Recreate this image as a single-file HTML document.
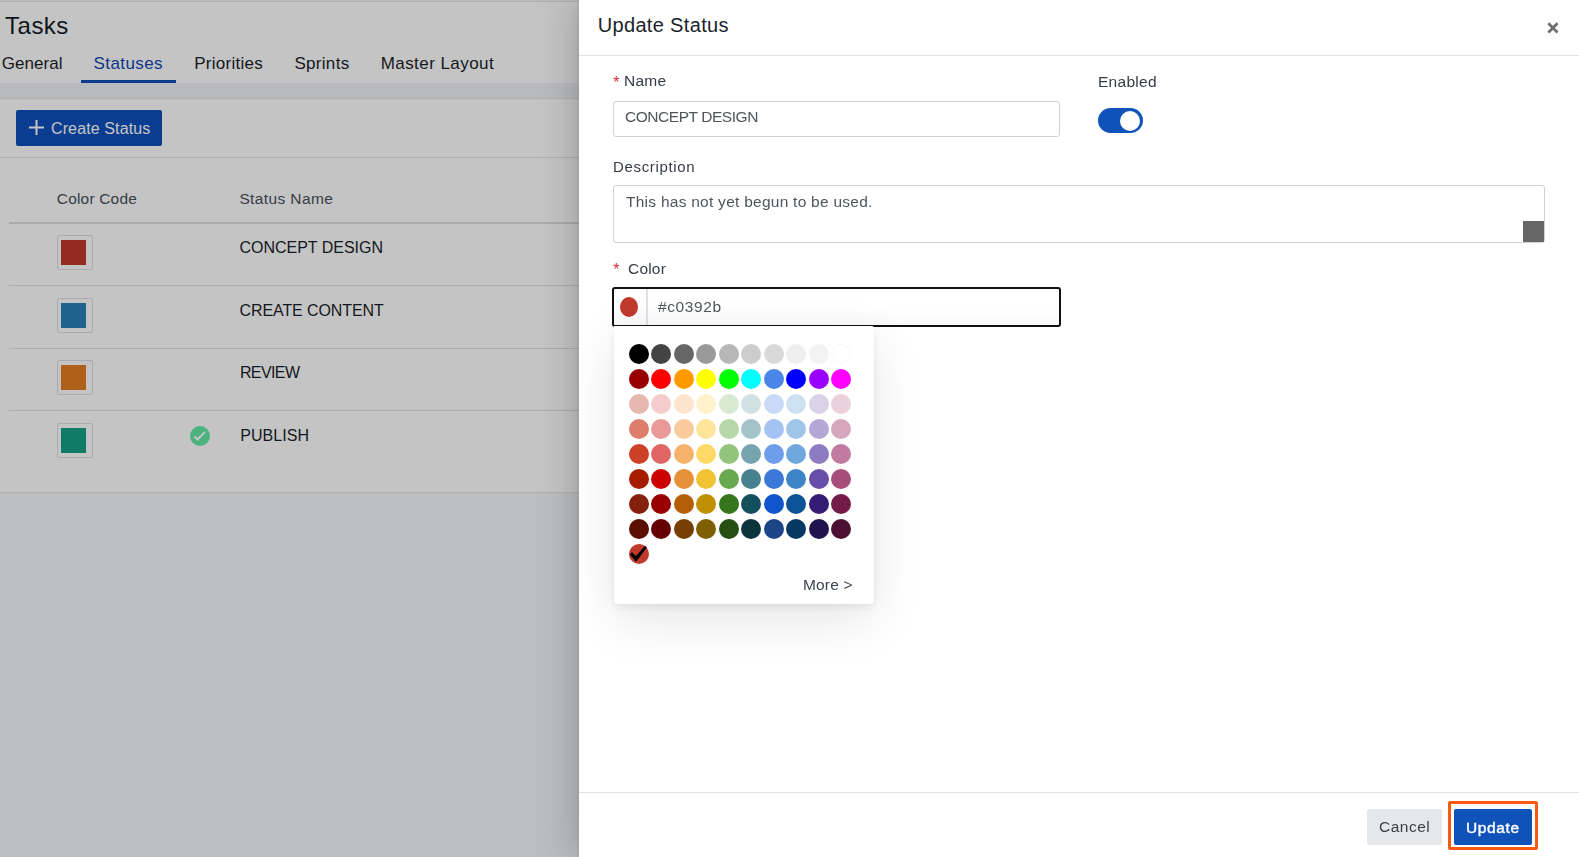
<!DOCTYPE html>
<html><head><meta charset="utf-8">
<style>
*{box-sizing:border-box;margin:0;padding:0}
html,body{width:1579px;height:857px;overflow:hidden;background:#fff;font-family:"Liberation Sans",sans-serif;position:relative}
.a{position:absolute;white-space:nowrap;line-height:1}
.g{will-change:transform}
.b{position:absolute}
#mask{position:absolute;left:0;top:0;width:1579px;height:857px;background:rgba(0,0,0,0.23)}
#drawer{position:absolute;left:579px;top:0;width:1000px;height:857px;background:#fff;box-shadow:-8px 0 32px rgba(0,0,0,0.17),-1px 0 4px rgba(0,0,0,0.08)}
.sw{position:absolute;left:57px;width:36px;height:35px;border:1px solid #dcdfe4;border-radius:2px;background:#fff}
.sw i{position:absolute;left:3px;top:4px;width:25px;height:25px}
.pal{position:absolute;width:20px;height:20px;border-radius:50%}
</style></head><body>
<div class="b" style="left:0;top:0;width:579px;height:1px;background:#f3f3f3"></div><div class="b" style="left:0;top:1px;width:579px;height:1px;background:#e0e3e9"></div>
<div class="a" style="left:5.1px;top:13.8px;font-size:24px;letter-spacing:0.47px;color:#161a26;">Tasks</div>
<div class="a" style="left:1.7px;top:55.0px;font-size:17px;letter-spacing:0.08px;color:#1b1f2a;">General</div>
<div class="a" style="left:93.5px;top:55.0px;font-size:17px;letter-spacing:0.41px;color:#1048b0;">Statuses</div>
<div class="a" style="left:194.2px;top:55.0px;font-size:17px;letter-spacing:0.26px;color:#1b1f2a;">Priorities</div>
<div class="a" style="left:294.4px;top:55.0px;font-size:17px;letter-spacing:0.31px;color:#1b1f2a;">Sprints</div>
<div class="a" style="left:380.7px;top:55.0px;font-size:17px;letter-spacing:0.44px;color:#1b1f2a;">Master Layout</div>
<div class="b" style="left:81px;top:80px;width:95px;height:3px;background:#0f4fb8"></div>
<div class="b" style="left:0;top:83px;width:579px;height:15px;background:#f1f3f7"></div>
<div class="b" style="left:0;top:98px;width:579px;height:1px;background:#e3e5ea"></div>
<div class="b" style="left:16px;top:110px;width:146px;height:36px;background:#0e50bd;border-radius:2px"></div>
<svg class="b" style="left:29px;top:120px" width="15" height="15"><path d="M7.5 0V15M0 7.5H15" stroke="#fff" stroke-width="2"/></svg>
<div class="a" style="left:51.0px;top:120.8px;font-size:16px;letter-spacing:0.12px;color:#fff;">Create Status</div>
<div class="b" style="left:0;top:157px;width:579px;height:1px;background:#e3e5ea"></div>
<div class="a" style="left:56.8px;top:191.4px;font-size:15.5px;letter-spacing:0.18px;color:#4a505c;">Color Code</div>
<div class="a" style="left:239.4px;top:190.6px;font-size:15.5px;letter-spacing:0.39px;color:#4a505c;">Status Name</div>
<div class="b" style="left:9px;top:222px;width:570px;height:2px;background:#dcdfe4"></div>
<div class="sw" style="top:235px"><i style="background:#c0392b"></i></div>
<div class="a" style="left:239.6px;top:240.1px;font-size:16px;letter-spacing:-0.03px;color:#1b1f2a;">CONCEPT DESIGN</div>
<div class="b" style="left:9px;top:285px;width:570px;height:1px;background:#dfe2e7"></div>
<div class="sw" style="top:298px"><i style="background:#2980b9"></i></div>
<div class="a" style="left:239.5px;top:303.0px;font-size:16px;letter-spacing:-0.09px;color:#1b1f2a;">CREATE CONTENT</div>
<div class="b" style="left:9px;top:348px;width:570px;height:1px;background:#dfe2e7"></div>
<div class="sw" style="top:360px"><i style="background:#e67e22"></i></div>
<div class="a" style="left:239.9px;top:365.1px;font-size:16px;letter-spacing:-0.6px;color:#1b1f2a;">REVIEW</div>
<div class="b" style="left:9px;top:410px;width:570px;height:1px;background:#dfe2e7"></div>
<div class="sw" style="top:423px"><i style="background:#16a085"></i></div>
<svg class="b" style="left:190px;top:426px" width="20" height="20"><circle cx="10" cy="10" r="10" fill="#63e9a5"/><path d="M4.5 10.5L7.5 13.5L15 6" stroke="#fff" stroke-width="2" fill="none"/></svg>
<div class="a" style="left:240.3px;top:428.0px;font-size:16px;letter-spacing:0.03px;color:#1b1f2a;">PUBLISH</div>
<div class="b" style="left:0;top:492px;width:579px;height:1px;background:#e6e6e6"></div>
<div class="b" style="left:0;top:493px;width:579px;height:364px;background:#f5f6fa"></div>
<div id="mask"></div>
<div id="drawer"></div>
<div class="a" style="left:597.7px;top:15.4px;font-size:20px;letter-spacing:0.34px;color:#1b1f2a;">Update Status</div>
<svg class="b" style="left:1547px;top:21.5px" width="12" height="12"><path d="M1.3 1.3L10.5 10.5M10.5 1.3L1.3 10.5" stroke="#6e6e6e" stroke-width="2.7"/></svg>
<div class="b" style="left:579px;top:55px;width:1000px;height:1px;background:#e1e4e9"></div>
<div class="a" style="left:613.2px;top:75px;font-size:16px;color:#e0303a">*</div>
<div class="a g" style="left:624.4px;top:73.4px;font-size:15.5px;letter-spacing:0.23px;color:#363b47;">Name</div>
<div class="a g" style="left:1097.5px;top:73.5px;font-size:15.5px;letter-spacing:0.28px;color:#363b47;">Enabled</div>
<div class="b" style="left:613px;top:101px;width:447px;height:36px;border:1px solid #cdd2da;border-radius:3px"></div>
<div class="a g" style="left:624.7px;top:109.2px;font-size:15.5px;letter-spacing:-0.45px;color:#50555d;">CONCEPT DESIGN</div>
<div class="b" style="left:1098px;top:108px;width:45px;height:25px;border-radius:12.5px;background:#0f52ba"></div>
<div class="b" style="left:1119.75px;top:110.75px;width:20.5px;height:20.5px;border-radius:50%;background:#fff"></div>
<div class="a g" style="left:612.5px;top:158.6px;font-size:15px;letter-spacing:0.66px;color:#363b47;">Description</div>
<div class="b" style="left:613px;top:185px;width:932px;height:58px;border:1px solid #cdd2da;border-radius:3px"></div>
<div class="a g" style="left:626.3px;top:194.0px;font-size:15.5px;letter-spacing:0.26px;color:#50555d;">This has not yet begun to be used.</div>
<div class="b" style="left:1523px;top:221px;width:21px;height:21px;background:#666"></div>
<div class="a" style="left:613.2px;top:262px;font-size:16px;color:#e0303a">*</div>
<div class="a g" style="left:627.7px;top:261.4px;font-size:15.5px;letter-spacing:0.2px;color:#363b47;">Color</div>
<div class="b" style="left:612px;top:287px;width:449px;height:40px;border:2px solid #111;border-radius:3px;background:linear-gradient(#fff 50%,#fafafa)"></div>
<div class="b" style="left:620px;top:297px;width:18px;height:20px;border-radius:50%;background:#c0392b"></div>
<div class="b" style="left:645.5px;top:289px;width:2px;height:36px;background:#dde1e8"></div>
<div class="a g" style="left:658.3px;top:298.8px;font-size:15.5px;letter-spacing:0.62px;color:#50555e;">#c0392b</div>
<div class="b" style="left:614px;top:326px;width:260px;height:278px;background:#fff;border-radius:0 2px 3px 3px;box-shadow:0 3px 8px rgba(0,0,0,0.08),0 16px 50px rgba(0,0,0,0.1)"></div>
<i class="pal" style="left:628.8px;top:343.9px;background:#000000"></i>
<i class="pal" style="left:651.28px;top:343.9px;background:#434343"></i>
<i class="pal" style="left:673.76px;top:343.9px;background:#666666"></i>
<i class="pal" style="left:696.24px;top:343.9px;background:#999999"></i>
<i class="pal" style="left:718.72px;top:343.9px;background:#b7b7b7"></i>
<i class="pal" style="left:741.2px;top:343.9px;background:#cccccc"></i>
<i class="pal" style="left:763.68px;top:343.9px;background:#d9d9d9"></i>
<i class="pal" style="left:786.16px;top:343.9px;background:#efefef"></i>
<i class="pal" style="left:808.64px;top:343.9px;background:#f3f3f3"></i>
<i class="pal" style="left:831.12px;top:343.9px;background:#ffffff;box-shadow:inset 0 0 0 1px #f8f8f8"></i>
<i class="pal" style="left:628.8px;top:368.9px;background:#980000"></i>
<i class="pal" style="left:651.28px;top:368.9px;background:#ff0000"></i>
<i class="pal" style="left:673.76px;top:368.9px;background:#ff9900"></i>
<i class="pal" style="left:696.24px;top:368.9px;background:#ffff00"></i>
<i class="pal" style="left:718.72px;top:368.9px;background:#00ff00"></i>
<i class="pal" style="left:741.2px;top:368.9px;background:#00ffff"></i>
<i class="pal" style="left:763.68px;top:368.9px;background:#4a86e8"></i>
<i class="pal" style="left:786.16px;top:368.9px;background:#0000ff"></i>
<i class="pal" style="left:808.64px;top:368.9px;background:#9900ff"></i>
<i class="pal" style="left:831.12px;top:368.9px;background:#ff00ff"></i>
<i class="pal" style="left:628.8px;top:393.9px;background:#e6b8af"></i>
<i class="pal" style="left:651.28px;top:393.9px;background:#f4cccc"></i>
<i class="pal" style="left:673.76px;top:393.9px;background:#fce5cd"></i>
<i class="pal" style="left:696.24px;top:393.9px;background:#fff2cc"></i>
<i class="pal" style="left:718.72px;top:393.9px;background:#d9ead3"></i>
<i class="pal" style="left:741.2px;top:393.9px;background:#d0e0e3"></i>
<i class="pal" style="left:763.68px;top:393.9px;background:#c9daf8"></i>
<i class="pal" style="left:786.16px;top:393.9px;background:#cfe2f3"></i>
<i class="pal" style="left:808.64px;top:393.9px;background:#d9d2e9"></i>
<i class="pal" style="left:831.12px;top:393.9px;background:#ead1dc"></i>
<i class="pal" style="left:628.8px;top:418.9px;background:#dd7e6b"></i>
<i class="pal" style="left:651.28px;top:418.9px;background:#ea9999"></i>
<i class="pal" style="left:673.76px;top:418.9px;background:#f9cb9c"></i>
<i class="pal" style="left:696.24px;top:418.9px;background:#ffe599"></i>
<i class="pal" style="left:718.72px;top:418.9px;background:#b6d7a8"></i>
<i class="pal" style="left:741.2px;top:418.9px;background:#a2c4c9"></i>
<i class="pal" style="left:763.68px;top:418.9px;background:#a4c2f4"></i>
<i class="pal" style="left:786.16px;top:418.9px;background:#9fc5e8"></i>
<i class="pal" style="left:808.64px;top:418.9px;background:#b4a7d6"></i>
<i class="pal" style="left:831.12px;top:418.9px;background:#d5a6bd"></i>
<i class="pal" style="left:628.8px;top:443.9px;background:#cc4125"></i>
<i class="pal" style="left:651.28px;top:443.9px;background:#e06666"></i>
<i class="pal" style="left:673.76px;top:443.9px;background:#f6b26b"></i>
<i class="pal" style="left:696.24px;top:443.9px;background:#ffd966"></i>
<i class="pal" style="left:718.72px;top:443.9px;background:#93c47d"></i>
<i class="pal" style="left:741.2px;top:443.9px;background:#76a5af"></i>
<i class="pal" style="left:763.68px;top:443.9px;background:#6d9eeb"></i>
<i class="pal" style="left:786.16px;top:443.9px;background:#6fa8dc"></i>
<i class="pal" style="left:808.64px;top:443.9px;background:#8e7cc3"></i>
<i class="pal" style="left:831.12px;top:443.9px;background:#c27ba0"></i>
<i class="pal" style="left:628.8px;top:468.9px;background:#a61c00"></i>
<i class="pal" style="left:651.28px;top:468.9px;background:#cc0000"></i>
<i class="pal" style="left:673.76px;top:468.9px;background:#e69138"></i>
<i class="pal" style="left:696.24px;top:468.9px;background:#f1c232"></i>
<i class="pal" style="left:718.72px;top:468.9px;background:#6aa84f"></i>
<i class="pal" style="left:741.2px;top:468.9px;background:#45818e"></i>
<i class="pal" style="left:763.68px;top:468.9px;background:#3c78d8"></i>
<i class="pal" style="left:786.16px;top:468.9px;background:#3d85c6"></i>
<i class="pal" style="left:808.64px;top:468.9px;background:#674ea7"></i>
<i class="pal" style="left:831.12px;top:468.9px;background:#a64d79"></i>
<i class="pal" style="left:628.8px;top:493.9px;background:#85200c"></i>
<i class="pal" style="left:651.28px;top:493.9px;background:#990000"></i>
<i class="pal" style="left:673.76px;top:493.9px;background:#b45f06"></i>
<i class="pal" style="left:696.24px;top:493.9px;background:#bf9000"></i>
<i class="pal" style="left:718.72px;top:493.9px;background:#38761d"></i>
<i class="pal" style="left:741.2px;top:493.9px;background:#134f5c"></i>
<i class="pal" style="left:763.68px;top:493.9px;background:#1155cc"></i>
<i class="pal" style="left:786.16px;top:493.9px;background:#0b5394"></i>
<i class="pal" style="left:808.64px;top:493.9px;background:#351c75"></i>
<i class="pal" style="left:831.12px;top:493.9px;background:#741b47"></i>
<i class="pal" style="left:628.8px;top:518.9px;background:#5b0f00"></i>
<i class="pal" style="left:651.28px;top:518.9px;background:#660000"></i>
<i class="pal" style="left:673.76px;top:518.9px;background:#783f04"></i>
<i class="pal" style="left:696.24px;top:518.9px;background:#7f6000"></i>
<i class="pal" style="left:718.72px;top:518.9px;background:#274e13"></i>
<i class="pal" style="left:741.2px;top:518.9px;background:#0c343d"></i>
<i class="pal" style="left:763.68px;top:518.9px;background:#1c4587"></i>
<i class="pal" style="left:786.16px;top:518.9px;background:#073763"></i>
<i class="pal" style="left:808.64px;top:518.9px;background:#20124d"></i>
<i class="pal" style="left:831.12px;top:518.9px;background:#4c1130"></i>
<i class="pal" style="left:628.8px;top:543.9px;background:#c0392b"></i>
<svg class="b" style="left:620px;top:538px" width="40" height="32"><path d="M10.2 16.4L12 14.5L15.8 18.4L25.2 8L26.6 9.4L16 23.4Z" fill="#000" stroke="#000" stroke-width="0.6" stroke-linejoin="round"/></svg>
<div class="a g" style="left:802.6px;top:577.2px;font-size:15.5px;letter-spacing:0.16px;color:#3d4350;">More &gt;</div>
<div class="b" style="left:579px;top:792px;width:1000px;height:1px;background:#e3e3e3"></div>
<div class="b" style="left:1367px;top:809px;width:75px;height:36px;background:#e6e7eb;border-radius:2px"></div>
<div class="a g" style="left:1379.1px;top:819.3px;font-size:15.5px;letter-spacing:0.5px;color:#3a3f4a;">Cancel</div>
<div class="b" style="left:1448px;top:801px;width:90px;height:49px;border:3px solid #fb5a10;border-radius:2px"></div>
<div class="b" style="left:1454px;top:809px;width:78px;height:36px;background:#0f52ba;border-radius:2px"></div>
<div class="a g" style="left:1465.8px;top:819.5px;font-size:15.5px;letter-spacing:0.62px;color:#fff;-webkit-text-stroke:0.4px #fff">Update</div>
</body></html>
